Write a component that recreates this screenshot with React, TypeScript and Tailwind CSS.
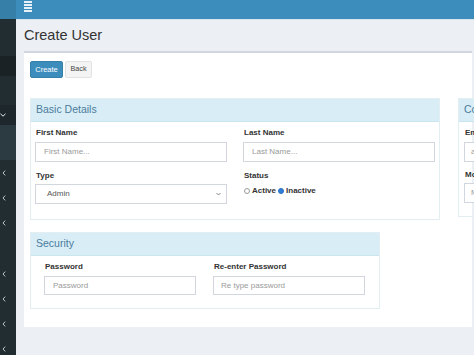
import React from "react";

const ChevLeft = () => (
  <svg width="4" height="6" viewBox="0 0 4 6" className="ml-[2px]">
    <path d="M3.2 0.6 L1 3 L3.2 5.4" stroke="#b8c7ce" strokeWidth="1" fill="none" />
  </svg>
);

const SideRow = ({ h, bg, chev }: { h: number; bg: string; chev?: "left" | "down" }) => (
  <div className={`${bg} flex items-center shrink-0`} style={{ height: h }}>
    {chev === "left" && <ChevLeft />}
    {chev === "down" && (
      <svg width="6" height="4" viewBox="0 0 6 4" className="ml-[0px]">
        <path d="M0.5 0.8 L3 3.2 L5.5 0.8" stroke="#e6edf0" strokeWidth="1" fill="none" />
      </svg>
    )}
  </div>
);

const Label = ({ children, mb = "mb-[4px]" }: { children: React.ReactNode; mb?: string }) => (
  <div className={`text-[8px] leading-[10px] font-bold text-[#333] pl-px ${mb} whitespace-nowrap`}>{children}</div>
);

const Input = ({ ph, h = 20, indent = "px-[8px]" }: { ph: string; h?: number; indent?: string }) => (
  <div
    className={`border border-[#d2d6de] bg-white flex items-center ${indent} text-[8px] text-[#9a9a9a] whitespace-nowrap overflow-hidden`}
    style={{ height: h }}
  >
    {ph}
  </div>
);

export default function App() {
  return (
    <div className="w-[474px] h-[355px] overflow-hidden flex font-['Liberation_Sans',Arial,sans-serif] bg-[#ecf0f5]">
      {/* Sidebar */}
      <div className="w-[16px] shrink-0 flex flex-col bg-[#222d32]">
        <SideRow h={19} bg="bg-[#367fa9]" />
        <SideRow h={37} bg="bg-[#222d32]" />
        <SideRow h={20} bg="bg-[#1a2226]" />
        <SideRow h={29} bg="bg-[#222d32]" />
        <SideRow h={20} bg="bg-[#1e282c]" chev="down" />
        <SideRow h={35} bg="bg-[#2c3b41]" />
        <SideRow h={25} bg="bg-[#222d32]" chev="left" />
        <SideRow h={25} bg="bg-[#222d32]" chev="left" />
        <SideRow h={26} bg="bg-[#222d32]" chev="left" />
        <SideRow h={25} bg="bg-[#222d32]" />
        <SideRow h={25} bg="bg-[#222d32]" chev="left" />
        <SideRow h={25} bg="bg-[#222d32]" chev="left" />
        <SideRow h={25} bg="bg-[#222d32]" chev="left" />
        <SideRow h={25} bg="bg-[#222d32]" chev="left" />
      </div>

      {/* Main */}
      <div className="flex-1 flex flex-col min-w-0">
        <div className="h-[19px] shrink-0 bg-[#3c8dbc] pl-[8px] flex items-start">
          <div className="flex flex-col gap-[1.5px] pt-[1px] w-[8px]">
            <div className="h-[1.5px] bg-[#e8f1f7]" />
            <div className="h-[1.5px] bg-[#e8f1f7]" />
            <div className="h-[1.5px] bg-[#e8f1f7]" />
            <div className="h-[1.5px] bg-[#e8f1f7]" />
          </div>
        </div>
        <div className="h-px shrink-0 bg-[#d6e4ee]" />
        <div className="h-[31px] shrink-0 pl-[8px] flex items-center text-[14.5px] text-[#333]">Create User</div>

        <div className="ml-[8px] w-[448px] h-[276px] shrink-0 bg-white border-t-2 border-[#d2d6de] px-[6px] pt-[8px]">
          <div className="flex gap-[2px]">
            <div className="h-[17px] w-[33px] bg-[#3c8dbc] border border-[#367fa9] rounded-[2px] text-white text-[7.5px] flex items-center justify-center">
              Create
            </div>
            <div className="h-[17px] w-[27px] bg-[#f4f4f4] border border-[#e2e2e2] rounded-[2px] text-[#444] text-[7.2px] flex items-center justify-center">
              Back
            </div>
          </div>

          <div className="mt-[20px] flex gap-[18px]">
            {/* Basic details */}
            <div className="w-[410px] shrink-0 border border-[#e3eef2]">
              <div className="h-[23px] bg-[#d9edf7] border-b border-[#c9e6ef] px-[5px] flex items-center text-[10.5px] text-[#4a7c9b]">
                Basic Details
              </div>
              <div className="px-[4px] pt-[6px] pb-[15px]">
                <div className="grid grid-cols-2 gap-x-[16px]">
                  <div>
                    <Label>First Name</Label>
                    <Input ph="First Name..." />
                  </div>
                  <div>
                    <Label>Last Name</Label>
                    <Input ph="Last Name..." />
                  </div>
                  <div className="mt-[9px]">
                    <Label mb="mb-[3px]">Type</Label>
                    <div className="h-[20px] border border-[#d2d6de] flex items-center justify-between pl-[11px] pr-[5px] text-[8px] text-[#555]">
                      <span>Admin</span>
                      <svg width="5" height="4" viewBox="0 0 5 4">
                        <path d="M0.5 1 L2.5 3 L4.5 1" stroke="#777" strokeWidth="0.9" fill="none" />
                      </svg>
                    </div>
                  </div>
                  <div className="mt-[9px]">
                    <Label mb="mb-[0px]">Status</Label>
                    <div className="flex items-center h-[10px] mt-[5px] text-[8px] font-bold text-[#333] pl-px">
                      <span className="w-[6px] h-[6px] rounded-full border border-[#9a9a9a] bg-white mr-[2px]" />
                      <span className="mr-[2px]">Active</span>
                      <span className="w-[6px] h-[6px] rounded-full bg-[#2f7fd8] border border-[#2a6fc0] mr-[2px]" />
                      <span>Inactive</span>
                    </div>
                  </div>
                </div>
              </div>
            </div>

            {/* Contact (clipped by the window edge, as in the reference) */}
            <div className="w-[120px] shrink-0 border border-[#e3eef2] self-start">
              <div className="h-[23px] bg-[#d9edf7] border-b border-[#c9e6ef] px-[5px] flex items-center text-[10.5px] text-[#4a7c9b] whitespace-nowrap">
                Contact Details
              </div>
              <div className="px-[5px] pt-[6px] pb-[13px]">
                <Label>Email</Label>
                <Input ph="abc@example.com" indent="px-[6px]" />
                <div className="mt-[8px]">
                  <Label mb="mb-[3px]">Mobile</Label>
                  <Input ph="Mobile..." indent="px-[6px]" />
                </div>
              </div>
            </div>
          </div>

          {/* Security */}
          <div className="mt-[12px] w-[350px] border border-[#e3eef2]">
            <div className="h-[23px] bg-[#d9edf7] border-b border-[#c9e6ef] px-[5px] flex items-center text-[10.5px] text-[#4a7c9b]">
              Security
            </div>
            <div className="pl-[13px] pr-[14px] pt-[6px] pb-[13px] grid grid-cols-2 gap-x-[17px]">
              <div>
                <Label>Password</Label>
                <Input ph="Password" h={19} />
              </div>
              <div>
                <Label>Re-enter Password</Label>
                <Input ph="Re type password" h={19} indent="px-[7px]" />
              </div>
            </div>
          </div>
        </div>
      </div>
    </div>
  );
}
